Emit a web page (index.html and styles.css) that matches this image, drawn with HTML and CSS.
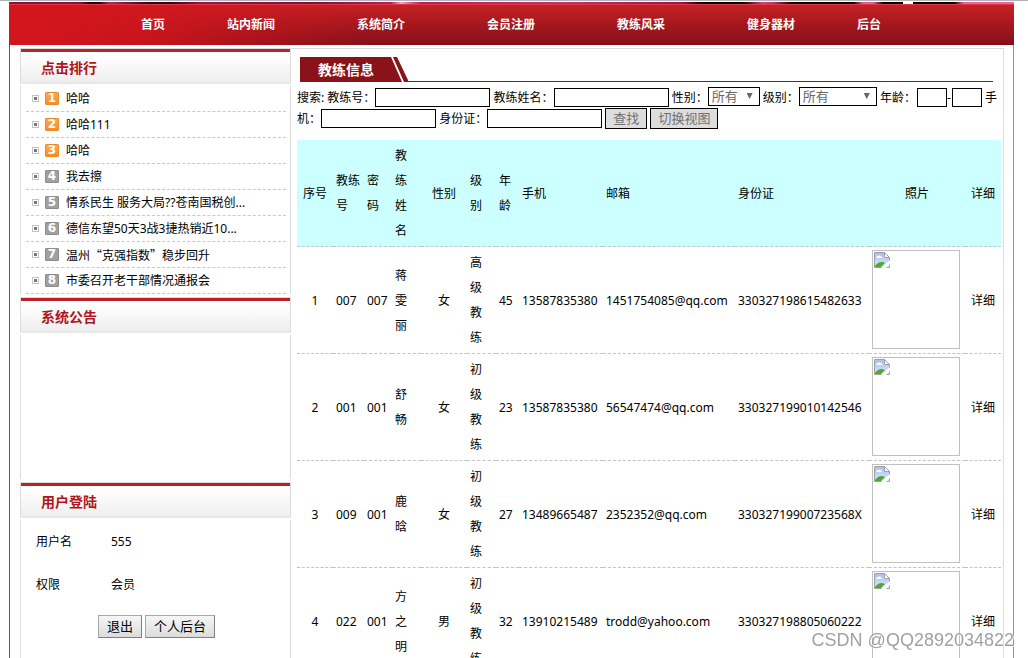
FILE: index.html
```html
<!DOCTYPE html>
<html lang="zh-CN">
<head>
<meta charset="utf-8">
<title>教练信息</title>
<link rel="stylesheet" href="styles.css">
</head>
<body>
<svg class="defs" aria-hidden="true">
  <defs>
    <linearGradient id="sky" x1="0" y1="0" x2="0" y2="1">
      <stop offset="0" stop-color="#a9c0ee"/>
      <stop offset="1" stop-color="#dce6fa"/>
    </linearGradient>
    <symbol id="broken" viewBox="0 0 16 16">
      <path d="M.5 .5H10.500L15.500 5.500V15.500H.5Z" fill="#fff" stroke="#a0a0a0"/>
      <path d="M1 1H10V6H15V15H1Z" fill="url(#sky)"/>
      <path d="M2.500 6a1.500 1.500 0 0 1 1.500-2 1.800 1.800 0 0 1 3 .5A1 1 0 0 1 8 6Z" fill="#fff"/>
      <path d="M1 15V14C4 9.500 8 9 11 11L7 15Z" fill="#4ea832"/>
      <path d="M7 16L16 8V12L12 16Z" fill="#fff"/>
      <path d="M10.500 .5V5.500H15.500Z" fill="#fff" stroke="#a0a0a0"/>
    </symbol>
  </defs>
</svg>
<div class="page">
  <div class="banner"></div>
  <nav class="nav">
    <a class="short" href="#">首页</a>
    <a href="#">站内新闻</a>
    <a href="#">系统简介</a>
    <a href="#">会员注册</a>
    <a href="#">教练风采</a>
    <a href="#">健身器材</a>
    <a class="short" href="#">后台</a>
  </nav>
  <div class="columns">
    <aside class="side">
      <section class="panel">
        <h2>点击排行</h2>
        <ol class="rank">
          <li><i></i><b class="hot">1</b><a href="#">哈哈</a></li>
          <li><i></i><b class="hot">2</b><a href="#">哈哈111</a></li>
          <li><i></i><b class="hot">3</b><a href="#">哈哈</a></li>
          <li><i></i><b>4</b><a href="#">我去擦</a></li>
          <li><i></i><b>5</b><a href="#">情系民生 服务大局??苍南国税创...</a></li>
          <li><i></i><b>6</b><a href="#">德信东望50天3战3捷热销近10...</a></li>
          <li><i></i><b>7</b><a href="#">温州<span class="cjk">“</span>克强指数<span class="cjk">”</span>稳步回升</a></li>
          <li><i></i><b>8</b><a href="#">市委召开老干部情况通报会</a></li>
        </ol>
      </section>
      <section class="panel">
        <h2>系统公告</h2>
        <div class="notice"></div>
      </section>
      <section class="panel last">
        <h2>用户登陆</h2>
        <div class="user">
          <dl>
            <dt>用户名</dt><dd>555</dd>
            <dt>权限</dt><dd>会员</dd>
          </dl>
          <div class="actions"><button type="button">退出</button><button type="button">个人后台</button></div>
        </div>
      </section>
    </aside>
    <main class="main">
      <div class="heading">
        <h1>教练信息</h1>
        <svg class="slant" viewBox="0 0 20 25" aria-hidden="true"><path d="M0 0H3L14 25H0ZM5 0H9L21 25H16Z" fill="#8a1219"/></svg>
        <span class="rule"></span>
      </div>
      <form class="search">
        搜索: <label for="no">教练号：</label><input id="no" type="text">
        <label for="name">教练姓名：</label><input id="name" type="text">
        <label for="sex">性别：</label><span class="pick"><select id="sex"><option>所有</option></select></span>
        <label for="level">级别：</label><span class="pick wide"><select id="level"><option>所有</option></select></span>
        <label for="age1">年龄：</label><input id="age1" class="age" type="text">-<input class="age" type="text" aria-label="年龄上限">
        <label for="tel">手机：</label><input id="tel" type="text">
        <label for="idno">身份证：</label><input id="idno" type="text">
        <button type="button">查找</button>
        <button type="button">切换视图</button>
      </form>
      <table class="list">
        <colgroup>
          <col class="w36"><col class="w31"><col class="w28"><col class="w29"><col class="w46"><col class="w29"><col class="w23"><col class="w84"><col><col class="w134"><col class="w96"><col class="w36">
        </colgroup>
        <thead>
          <tr><th class="c">序号</th><th>教练号</th><th>密码</th><th>教练姓名</th><th class="c">性别</th><th>级别</th><th>年龄</th><th>手机</th><th>邮箱</th><th>身份证</th><th class="c">照片</th><th class="c">详细</th></tr>
        </thead>
        <tbody>
          <tr><td class="c">1</td><td>007</td><td>007</td><td>蒋雯丽</td><td class="c">女</td><td>高级教练</td><td>45</td><td>13587835380</td><td>1451754085@qq.com</td><td>330327198615482633</td><td><div class="photo"><svg><use href="#broken"/></svg></div></td><td class="c"><a href="#">详细</a></td></tr>
          <tr><td class="c">2</td><td>001</td><td>001</td><td>舒畅</td><td class="c">女</td><td>初级教练</td><td>23</td><td>13587835380</td><td>56547474@qq.com</td><td>330327199010142546</td><td><div class="photo"><svg><use href="#broken"/></svg></div></td><td class="c"><a href="#">详细</a></td></tr>
          <tr><td class="c">3</td><td>009</td><td>001</td><td>鹿晗</td><td class="c">女</td><td>初级教练</td><td>27</td><td>13489665487</td><td>2352352@qq.com</td><td>33032719900723568X</td><td><div class="photo"><svg><use href="#broken"/></svg></div></td><td class="c"><a href="#">详细</a></td></tr>
          <tr><td class="c">4</td><td>022</td><td>001</td><td>方之明</td><td class="c">男</td><td>初级教练</td><td>32</td><td>13910215489</td><td>trodd@yahoo.com</td><td>330327198805060222</td><td><div class="photo"><svg><use href="#broken"/></svg></div></td><td class="c"><a href="#">详细</a></td></tr>
        </tbody>
      </table>
    </main>
  </div>
</div>
<div class="mark">CSDN @QQ2892034822</div>
</body>
</html>
```

FILE: styles.css
```css
* { box-sizing: border-box; }
html { height: 100%; }
body {
  margin: 0;
  height: 100%;
  overflow: hidden;
  border-top: 1px solid #b4b4b4;
  background: #fff;
  color: #000;
  font: 12px/25px "Noto Sans", "Noto Sans CJK SC", sans-serif;
}
a { color: inherit; text-decoration: none; }
h1, h2, ol, dl, dd { margin: 0; padding: 0; }
button, input, select { font: inherit; }
.defs { position: absolute; width: 0; height: 0; }
.cjk { font-family: "Noto Sans CJK SC", sans-serif; }

.page {
  margin: 1px 14px 0 9px;
  border-left: 1px solid #b83a20;
  border-right: 1px solid #d98236;
}
.banner {
  height: 2px;
  margin: 0 -1px;
  background: linear-gradient(90deg, #8a1145 0 7%, #1a0010 8% 9%, #b02a70 10%, #2a0418 14% 16%, #a01050 19%, #7a1040 30%, #b81c68 38%, #f4a0cc 39%, #b81c68 41%, #c0307c 55%, #a01058 67%, #000 69% 73%, #d04090 75%, #c03080 76%, #000 78% 84%, #e060a0 85% 86%, #000 87% 89%, #fff 89% 90%, #000 90% 94%, #f060a8 95%);
}
.nav {
  display: flex;
  height: 41px;
  margin: 0 -1px;
  padding-left: 111px;
  border-top: 1px solid #dc3a40;
  background:
    linear-gradient(100deg, #d4151d 0, #d4151dcc 15%, #d4151d00 36%),
    linear-gradient(#c42226, #a8181e 45%, #84101a);
}
.nav a {
  width: 130px;
  color: #fff;
  font-weight: bold;
  line-height: 39px;
  text-align: center;
}
.nav .short { width: 66px; }

.columns { display: flex; padding: 3px 9px 0 10px; }
.side { flex: none; width: 271px; }
.panel { margin-bottom: 3px; }
.panel h2 {
  height: 36px;
  margin-bottom: 2px;
  padding-left: 20px;
  border: 1px solid #dcdcdc;
  border-bottom: 2px solid #e8e8e8;
  background: linear-gradient(#bd2026 3px, #fff 3px, #fdfdfd 10px, #eee);
  color: #b0151c;
  font-size: 14px;
  line-height: 38px;
}
.rank, .notice, .user { border: solid #dcdcdc; border-width: 0 1px; }
.rank { padding: 0 4px 0 5px; list-style: none; }
.rank li {
  display: flex;
  align-items: center;
  height: 26px;
  padding-left: 6px;
  border-bottom: 1px dashed #c8c8c8;
}
.rank i {
  width: 7px;
  height: 7px;
  margin-right: 6px;
  border: 1px solid #c4c4c4;
  background: linear-gradient(#777, #777) center / 3px 3px no-repeat;
}
.rank b {
  width: 14px;
  height: 13px;
  margin-right: 7px;
  border: 1px solid #8c8c8c;
  border-radius: 1px;
  background: #a0a0a0;
  color: #fff;
  font: bold 12px/11px "DejaVu Sans", sans-serif;
  text-align: center;
}
.rank .hot { border-color: #ea8a2c; background: linear-gradient(#ffac48, #f88c22); }
.notice { height: 144px; }
.user { padding: 0 15px 60px; }
.user dl {
  display: grid;
  grid-template-columns: 75px 1fr;
  line-height: 43px;
}
.actions { display: flex; gap: 3px; padding: 9px 0 0 62px; }
.actions button {
  height: 23px;
  padding: 0 8px;
  border: 1px solid #8f8f8f;
  border-color: #a8a8a8 #808080 #808080 #a8a8a8;
  background: linear-gradient(#f6f6f6, #dcdcdc);
  color: #000;
  font-size: 13px;
  line-height: 21px;
}

.main {
  flex: 1;
  min-width: 0;
  padding: 8px 2px 0 6px;
  border: solid #dcdcdc;
  border-width: 1px 1px 0 0;
}
.heading { display: flex; height: 25px; margin: 0 8px 5px 3px; }
.heading h1 {
  width: 88px;
  padding-left: 18px;
  background: #8a1219;
  color: #fff;
  font-size: 14px;
  line-height: 26px;
}
.slant { flex: none; width: 20px; height: 25px; }
.rule { flex: 1; margin-left: -1px; border-bottom: 1px solid #84191e; }

.search { line-height: 21px; }
.search input, .search select {
  height: 19px;
  padding: 0 3px;
  border: 1px solid #000;
  border-radius: 0;
  background: #fff;
}
.search input { width: 115px; margin: 1px 0 0; vertical-align: top; }
.search .age { width: 30px; margin-left: 1px; }
.pick { display: inline-block; position: relative; width: 52px; height: 19px; vertical-align: top; }
.pick.wide { width: 78px; }
.pick select {
  display: block;
  width: 100%;
  appearance: none;
  color: #666;
  font-size: 13px;
  line-height: 17px;
}
.pick::after {
  content: "";
  position: absolute;
  top: 6px;
  right: 7px;
  width: 6px;
  height: 6px;
  background: #666;
  clip-path: polygon(0 0, 100% 0, 50% 100%);
}
.search button {
  height: 21px;
  padding: 0 7px;
  border: 1px solid #000;
  background: #ddd;
  color: #707070;
  font-size: 13px;
  line-height: 19px;
  vertical-align: top;
}

.list {
  width: 100%;
  margin-top: 11px;
  border-collapse: separate;
  border-spacing: 0;
  table-layout: fixed;
}
.list th, .list td {
  height: 107px;
  padding: 3px;
  border-bottom: 1px dashed #c4c4c4;
  font-weight: normal;
  text-align: left;
}
.list th { background: #cff; }
.list .c { text-align: center; }
.w23 { width: 23px; }
.w28 { width: 28px; }
.w29 { width: 29px; }
.w31 { width: 31px; }
.w36 { width: 36px; }
.w46 { width: 46px; }
.w84 { width: 84px; }
.w96 { width: 96px; }
.w134 { width: 134px; }
.photo {
  width: 88px;
  height: 99px;
  margin-bottom: 1px;
  padding: 1px;
  border: 1px solid #c0c0c0;
}
.photo svg { display: block; width: 16px; height: 16px; }

.mark {
  position: fixed;
  right: 14px;
  bottom: 6px;
  color: #8c8c8cd0;
  font: 18px/24px "Liberation Sans", Arial, sans-serif;
  text-shadow: 1px 1px 0 #ffffffb0;
}
```
